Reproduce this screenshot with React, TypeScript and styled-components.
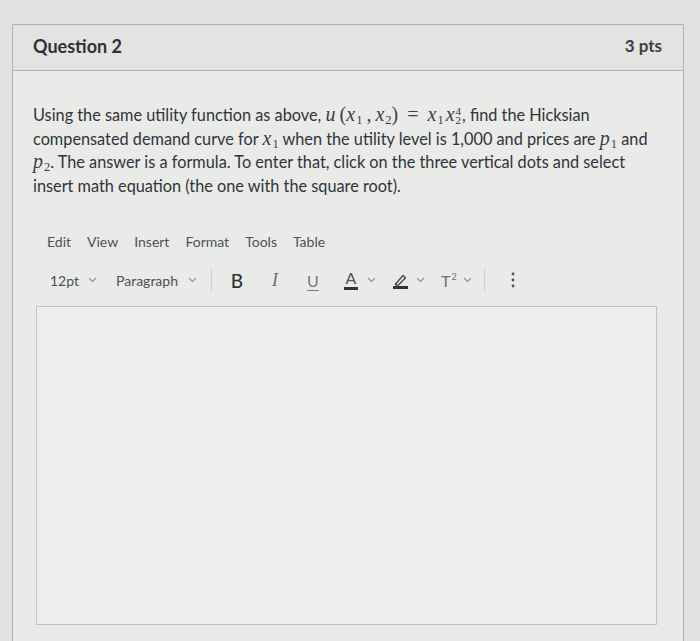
import React from "react";
import styled, { createGlobalStyle } from "styled-components";

const GlobalStyle = createGlobalStyle`
    html, body {
        margin: 0;
        padding: 0;
        background: #e2e2e0;
    }
    body {
        font-family: Lato, "Noto Sans", sans-serif;
        color: #30373d;
    }
`;

const Page = styled.div`
    height: 641px;
    box-sizing: border-box;
    padding: 24px 16px 0 12px;
    overflow: hidden;
`;

const Card = styled.div`
    height: 100%;
    display: flex;
    flex-direction: column;
    border: 1px solid #b2b2b0;
    border-bottom: none;
    background: #eaeae8;
`;

const Header = styled.div`
    height: 46px;
    flex: none;
    display: flex;
    align-items: center;
    justify-content: space-between;
    padding: 0 21px 4px 20px;
    box-sizing: border-box;
    background: #e3e3e1;
    border-bottom: 1px solid #b0b0ae;
`;

const Title = styled.h2`
    margin: 0;
    font-size: 18px;
    font-weight: 700;
    color: #2c3237;
`;

const Points = styled.span`
    font-size: 17px;
    font-weight: 700;
    color: #3a4146;
`;

const Body = styled.div`
    padding: 32px 20px 0 20px;
`;

const Prompt = styled.p`
    margin: 0;
    font-size: 16.3px;
    line-height: 23.6px;
    color: #2f353a;
    white-space: nowrap;
`;

const M = styled.span<{ $mr?: number }>`
    font-family: "Liberation Serif", "DejaVu Serif", serif;
    font-style: italic;
    font-size: 20px;
    line-height: 0;
    color: #3a3f44;
    margin-right: ${(p) => p.$mr ?? 0}px;
`;

const MRoman = styled.span<{ $space?: number }>`
    font-family: "Liberation Serif", "DejaVu Serif", serif;
    font-size: 20px;
    line-height: 0;
    color: #3a3f44;
    margin: 0 ${(p) => p.$space ?? 0}px;
`;

const Sub = styled.sub`
    font-style: normal;
    font-size: 12.5px;
    vertical-align: -3px;
    line-height: 0;
    margin-left: 1px;
`;

const Scripts = styled.span`
    display: inline-flex;
    flex-direction: column;
    font-family: "Liberation Serif", serif;
    font-size: 11px;
    line-height: 9px;
    vertical-align: 6px;
    margin: 0 1px 0 1px;
`;

const EditorArea = styled.div`
    margin: 34px 0 0 3px;
    width: 621px;
`;

const MenuBar = styled.div`
    display: flex;
    align-items: center;
    gap: 16px;
    height: 20px;
    padding-left: 11px;
    font-size: 14px;
    color: #4a5258;
`;

const Toolbar = styled.div`
    display: flex;
    align-items: center;
    height: 34px;
    margin-top: 12px;
    padding-left: 14px;
    font-size: 14px;
    color: #4a5258;
`;

const Group = styled.div<{ $ml?: number; $gap?: number }>`
    display: flex;
    align-items: center;
    margin-left: ${(p) => p.$ml ?? 0}px;
    gap: ${(p) => p.$gap ?? 9}px;
`;

const Sep = styled.div<{ $ml: number }>`
    width: 1px;
    height: 24px;
    background: #cfcfcd;
    margin-left: ${(p) => p.$ml}px;
`;

const IconBtn = styled.div<{ $ml?: number }>`
    width: 34px;
    height: 30px;
    display: flex;
    align-items: center;
    justify-content: center;
    margin-left: ${(p) => p.$ml ?? 0}px;
`;

const Bold = styled.span`
    font-family: Lato, sans-serif;
    font-size: 19px;
    font-weight: 500;
    color: #2e3439;
`;

const Italic = styled.span`
    font-family: "Liberation Serif", serif;
    font-style: italic;
    font-size: 19px;
    color: #6c757c;
`;

const Under = styled.span`
    font-family: Lato, sans-serif;
    font-size: 16px;
    color: #6d7c89;
    text-decoration: underline;
    text-underline-offset: 3px;
    text-decoration-thickness: 1px;
`;

const ColorA = styled.span`
    display: flex;
    flex-direction: column;
    align-items: center;
    font-size: 16px;
    line-height: 15px;
    color: #4d555b;
    &::after {
        content: "";
        width: 14px;
        height: 3px;
        margin-top: 2px;
        background: #2e3439;
    }
`;

const Super = styled.span`
    font-size: 16px;
    color: #6a737a;
    sup {
        font-size: 9px;
        vertical-align: 7px;
        margin-left: 1px;
    }
`;

const Editor = styled.div`
    margin-top: 9px;
    height: 317px;
    border: 1px solid #c3c3c1;
    background: #ededeb;
`;

const Chevron = () => (
    <svg width="9" height="6" viewBox="0 0 9 6">
        <polyline points="1,1 4.5,4.5 8,1" fill="none" stroke="#8e989f" strokeWidth="1.2" />
    </svg>
);

const Highlighter = () => (
    <svg width="17" height="17" viewBox="0 0 17 17">
        <path d="M4 11.5 L11 3.5 L13.5 5.8 L6.5 13 L4.2 13.2 Z" fill="none" stroke="#3e454a" strokeWidth="1.3" strokeLinejoin="round" />
        <path d="M4.2 13.2 L3.3 12.3 L4 11.5" fill="none" stroke="#3e454a" strokeWidth="1.2" />
        <rect x="1" y="14" width="15" height="3" fill="#2e3439" />
    </svg>
);

const Dots = () => (
    <svg width="4" height="16" viewBox="0 0 4 16">
        <circle cx="2" cy="2" r="1.4" fill="#4a5258" />
        <circle cx="2" cy="8" r="1.4" fill="#4a5258" />
        <circle cx="2" cy="14" r="1.4" fill="#4a5258" />
    </svg>
);

const App = () => {
    return (
        <>
            <GlobalStyle />
            <Page>
                <Card>
                    <Header>
                        <Title>Question 2</Title>
                        <Points>3 pts</Points>
                    </Header>
                    <Body>
                        <Prompt>
                            Using the same utility function as above,{" "}
                            <M>u</M> <MRoman>(</MRoman><M>x<Sub>1</Sub></M><MRoman $space={4}>,</MRoman><M>x<Sub>2</Sub></M><MRoman>)</MRoman>
                            <MRoman $space={9}>=</MRoman>
                            <M $mr={2}>x<Sub>1</Sub></M><M>x</M><Scripts><span>4</span><span>2</span></Scripts>, find the Hicksian
                            <br />
                            compensated demand curve for <M>x<Sub>1</Sub></M> when the utility level is 1,000 and prices are <M>p<Sub>1</Sub></M> and
                            <br />
                            <M>p<Sub>2</Sub></M>. The answer is a formula. To enter that, click on the three vertical dots and select
                            <br />
                            insert math equation (the one with the square root).
                        </Prompt>
                        <EditorArea>
                            <MenuBar>
                                <span>Edit</span>
                                <span>View</span>
                                <span>Insert</span>
                                <span>Format</span>
                                <span>Tools</span>
                                <span>Table</span>
                            </MenuBar>
                            <Toolbar>
                                <Group>
                                    <span>12pt</span>
                                    <Chevron />
                                </Group>
                                <Group $ml={19} $gap={10}>
                                    <span>Paragraph</span>
                                    <Chevron />
                                </Group>
                                <Sep $ml={14} />
                                <IconBtn $ml={8}><Bold>B</Bold></IconBtn>
                                <IconBtn $ml={4}><Italic>I</Italic></IconBtn>
                                <IconBtn $ml={4}><Under>U</Under></IconBtn>
                                <Group $ml={14}>
                                    <ColorA>A</ColorA>
                                    <Chevron />
                                </Group>
                                <Group $ml={16} $gap={7}>
                                    <Highlighter />
                                    <Chevron />
                                </Group>
                                <Group $ml={16} $gap={6}>
                                    <Super>T<sup>2</sup></Super>
                                    <Chevron />
                                </Group>
                                <Sep $ml={12} />
                                <Group $ml={26}>
                                    <Dots />
                                </Group>
                            </Toolbar>
                            <Editor />
                        </EditorArea>
                    </Body>
                </Card>
            </Page>
        </>
    );
};

export default App;
